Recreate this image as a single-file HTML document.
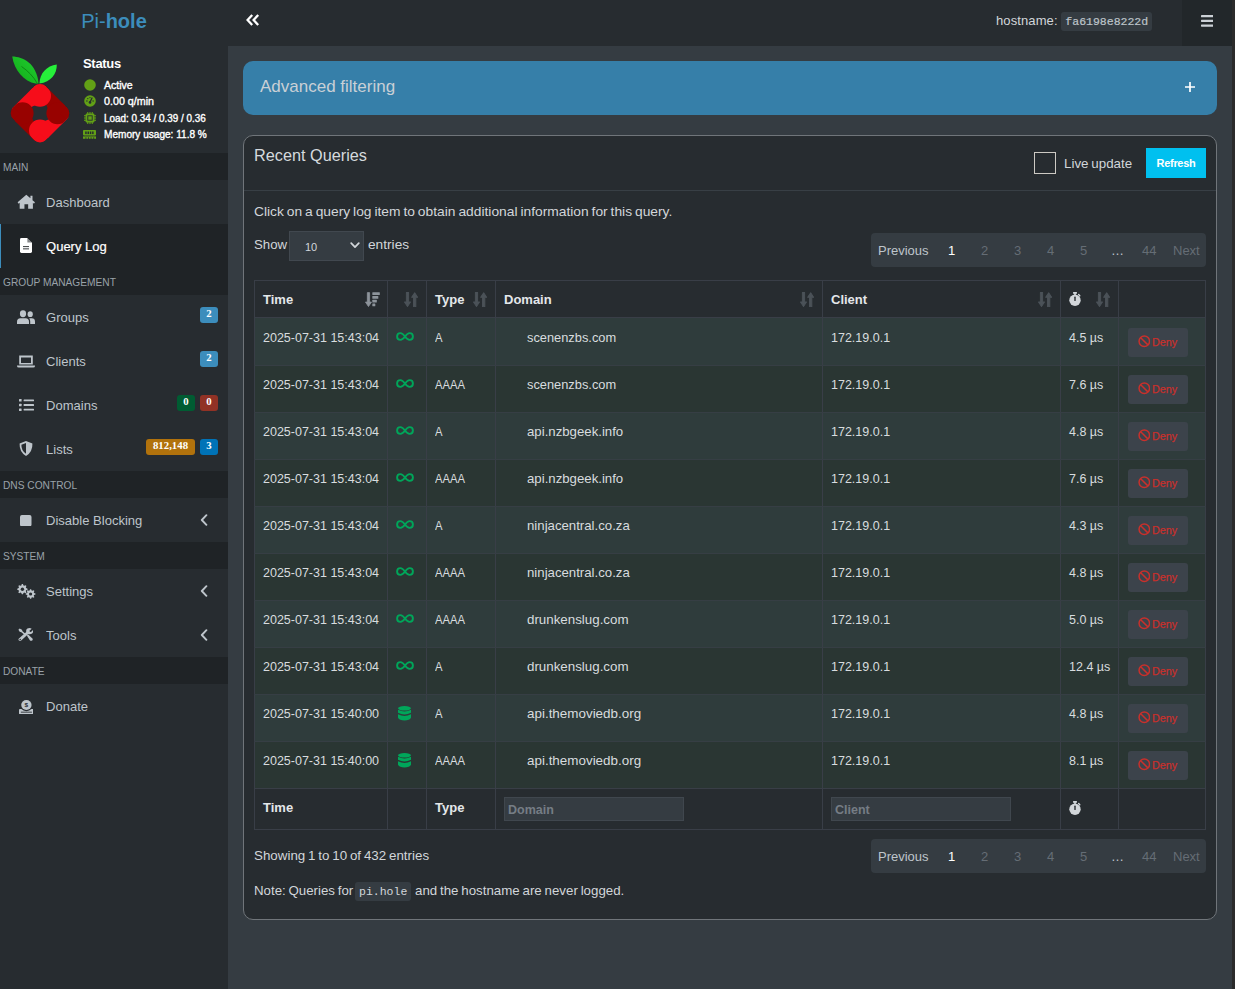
<!DOCTYPE html>
<html lang="en">
<head>
<meta charset="utf-8">
<title>Pi-hole - Query Log</title>
<style>
*{box-sizing:border-box;margin:0;padding:0}
html,body{width:1235px;height:989px;overflow:hidden}
body{background:#353c42;color:#bec5cb;font-family:"Liberation Sans",sans-serif;font-size:13px;position:relative}
.abs{position:absolute;white-space:nowrap}
svg{display:block}
#hdr{left:0;top:0;width:1232px;height:46px;background:#272c30}
#logo{left:0;top:0;width:228px;height:46px;text-align:center;color:#3c8dbc;font-size:20px;line-height:42px}
#hostname{left:996px;top:11px;height:20px;line-height:20px;font-size:13px;color:#d2d6da;letter-spacing:.1px}
#hostname code{font-family:"Liberation Mono",monospace;font-size:11.5px;background:#353c42;color:#bec5cb;padding:3px 4px 3px 4px;border-radius:3px;margin-left:0;letter-spacing:0;-webkit-text-stroke:.2px #bec5cb}
#burger{left:1182px;top:0;width:50px;height:46px;background:#22272a}
#scroll{left:1232px;top:0;width:3px;height:989px;background:#2b2b2b}
#side{left:0;top:46px;width:228px;height:943px;background:#272c30}
#status{left:83px;top:56px;font-size:13px;font-weight:bold;color:#fff;line-height:16px;letter-spacing:-0.3px}
.st{font-size:10px;font-weight:normal;color:#fff;line-height:16px;-webkit-text-stroke:.35px #fff}
.band{left:0;width:228px;height:27px;background:#1f2326;color:#9aa2a9;font-size:11.5px;line-height:29px;padding-left:3px}
.sx{display:inline-block;transform-origin:0 50%}
.item{left:0;width:228px;height:44px;color:#bec5cb;font-size:13.5px;line-height:46px}
.item .t{position:absolute;left:46px;top:0}
.item.act{background:#1f2326;border-left:1px solid #3c8dbc;color:#fff;-webkit-text-stroke:.2px #fff}
.item.act .t{left:45px}
.badge{position:absolute;top:12px;height:16px;border-radius:3px;color:#fff;font-family:"Liberation Serif",serif;font-weight:bold;font-size:10.8px;line-height:13px;text-align:center}
#adv{left:243px;top:61px;width:974px;height:54px;background:#367fa9;border-radius:10px;color:#c9d0d6;font-size:17px;line-height:52px;padding-left:17px}
#box{left:243px;top:135px;width:974px;height:785px;background:#272c30;border:1px solid #70757a;border-radius:10px}
#boxhdr{left:244px;top:190px;width:972px;height:1px;background:#383f45}
.h3{font-size:16.5px;color:#d5dade;line-height:20px}
.txt{font-size:13.5px;line-height:18px;color:#d2d6da;word-spacing:-.9px}
#cb{left:1034px;top:152px;width:22px;height:22px;border:1px solid #cdcac4;background:#272c30}
#refresh{left:1146px;top:148px;width:60px;height:30px;background:#00c0ef;color:#fff;font-size:11px;line-height:30px;text-align:center;font-weight:bold;letter-spacing:-0.3px}
#sel{left:289px;top:231px;width:75px;height:30px;background:#353c42;border:1px solid #41484f;font-size:11px;line-height:30px;padding-left:15px;color:#d2d6da}
.pag{left:871px;width:335px;height:34px;background:#353c42;border-radius:4px;font-size:13px;line-height:36px}
.pag span{position:absolute;top:0}
.pag .d{color:#656d75}
.pag .c{color:#fff}
/* table */
#tbl{left:254px;top:280px;width:951px;border-collapse:collapse;table-layout:fixed;font-size:12.5px;color:#d8dcdf}
#tbl td,#tbl th{border:1px solid #393e47;padding:0 0 0 8px;text-align:left;vertical-align:top;position:relative;white-space:nowrap;overflow:hidden}
#tbl th{height:36px;line-height:36px;font-size:13px;font-weight:bold;color:#e4e7ea;background:#272c30}
#tbl tbody td{height:47px;line-height:39px}
#tbl tr.o td{background:#2f3c3c}
#tbl tr.e td{background:#2a3633}
#tbl tbody td{border-top-color:#363e44;border-bottom-color:#363e44}
#tbl tbody tr.f td{border-top-color:#393e47}
#tbl tbody tr:last-child td{border-bottom-color:#393e47}
#tbl tr.f td{height:48px;padding-top:1px}
#tbl tr.f td .si,#tbl tr.f td .deny{margin-top:1px}
#tbl tfoot td{height:41px;line-height:38px;font-size:13px;font-weight:bold;color:#e4e7ea;background:#272c30}
.si{position:absolute;top:10.5px}
.deny{position:absolute;left:9px;top:9px;width:60px;height:28.5px;background:#3c434b;border-radius:3px;color:#c9302c;font-size:11.5px;line-height:29px;-webkit-text-stroke:.25px #c9302c}
.deny svg{position:absolute;left:9.5px;top:7.1px}
.deny span{position:absolute;left:24px;top:0;transform:scaleX(.94);transform-origin:0 50%}
.inp{position:absolute;left:8px;top:8px;width:180px;height:24px;background:#353c42;border:1px solid #40474e;color:#757d85;font-size:12.5px;line-height:25px;padding-left:3px;font-weight:bold}
code.c2{font-family:"Liberation Mono",monospace;font-size:11.5px;background:#353c42;color:#d2d6da;padding:3px 4px;border-radius:3px}

.ht{position:relative;top:1px}

</style>
</head>
<body>
<div id="hdr" class="abs"></div>
<div id="logo" class="abs">Pi-<b>hole</b></div>
<div class="abs" style="left:246px;top:14.4px;"><svg width="14" height="12" viewBox="0 0 14 12" preserveAspectRatio="none" style=""><path d="M6.2 1 L1.6 6 L6.2 11 M12.2 1 L7.6 6 L12.2 11" fill="none" stroke="#ffffff" stroke-width="2.3" stroke-linecap="butt" stroke-linejoin="miter"/></svg></div>
<div id="hostname" class="abs">hostname: <code>fa6198e8222d</code></div>
<div id="burger" class="abs"></div>
<div class="abs" style="left:1201px;top:15px;"><svg width="12.4" height="12" viewBox="0 0 12 11" preserveAspectRatio="none" style=""><g fill="#ccd1d6"><rect x="0" y="0" width="12" height="2.1" rx=".6"/><rect x="0" y="4.3" width="12" height="2.1" rx=".6"/><rect x="0" y="8.6" width="12" height="2.1" rx=".6"/></g></svg></div>
<div id="scroll" class="abs"></div>
<div id="side" class="abs"></div>
<div class="abs" style="left:10px;top:54px;"><svg width="62" height="90" viewBox="0 0 62 90" preserveAspectRatio="none" style="">
<defs><clipPath id="sq"><rect x="-23.2" y="-23.2" width="46.4" height="46.4" rx="8.5"/></clipPath>
<linearGradient id="lg1" x1="0" y1="1" x2="1" y2="0"><stop offset="0" stop-color="#12a818"/><stop offset="1" stop-color="#20d030"/></linearGradient></defs>
<path d="M2.2 2.4 C13 2.6 26.5 9 28.6 29.4 L25.6 29.6 C14 27 4.5 17 2.2 2.4 Z" fill="url(#lg1)"/>
<path d="M11.5 12.5 C18 17 23.5 22.5 27.3 29.5" fill="none" stroke="#0d7a12" stroke-width=".8"/>
<path d="M29.4 29.6 C29.8 19.5 36.5 11.8 46.8 10.6 C47 20 41 28.2 29.4 29.6 Z" fill="#26f03a"/>
<g transform="translate(30,59.2) rotate(45)" clip-path="url(#sq)">
<rect x="-23.2" y="-23.2" width="46.4" height="46.4" fill="#272c30"/>
<path transform="rotate(0)" fill="#f60d1a" d="M-24.2 -12.3 L-4.800000000000001 -12.3 Q-9.8 0 -13.8 10.3 L-24.2 18.3 Z"/><path transform="rotate(90)" fill="#980200" d="M-24.2 -12.3 L-4.800000000000001 -12.3 Q-9.8 0 -13.8 10.3 L-24.2 18.3 Z"/><path transform="rotate(180)" fill="#f60d1a" d="M-24.2 -12.3 L-4.800000000000001 -12.3 Q-9.8 0 -13.8 10.3 L-24.2 18.3 Z"/><path transform="rotate(270)" fill="#980200" d="M-24.2 -12.3 L-4.800000000000001 -12.3 Q-9.8 0 -13.8 10.3 L-24.2 18.3 Z"/>
<circle cx="-12.3" cy="-12.3" r="11.0" fill="#f60d1a"/>
<circle cx="12.3" cy="-12.3" r="11.0" fill="#980200"/>
<circle cx="12.3" cy="12.3" r="11.0" fill="#f60d1a"/>
<circle cx="-12.3" cy="12.3" r="11.0" fill="#980200"/>
<rect x="-23.2" y="-23.2" width="9" height="9" fill="#f60d1a"/><rect x="14.2" y="-23.2" width="9" height="9" fill="#980200"/><rect x="14.2" y="14.2" width="9" height="9" fill="#f60d1a"/><rect x="-23.2" y="14.2" width="9" height="9" fill="#980200"/>
</g></svg></div>
<div class="abs" id="status">Status</div>
<div class="abs" style="left:84px;top:79px;"><svg width="12" height="12" viewBox="0 0 12 12" preserveAspectRatio="none" style=""><circle cx="6" cy="6" r="5.8" fill="#62a016"/></svg></div>
<div class="abs" style="left:84px;top:95px;"><svg width="12" height="12" viewBox="0 0 12 12" preserveAspectRatio="none" style=""><circle cx="6" cy="6" r="5.8" fill="#62a016"/><path d="M6 7.2 L8 3" stroke="#272c30" stroke-width="1.3" stroke-linecap="round"/><circle cx="6" cy="7.4" r="1.3" fill="#272c30"/><circle cx="2.9" cy="6" r=".7" fill="#272c30"/><circle cx="3.8" cy="3.6" r=".7" fill="#272c30"/><circle cx="6" cy="2.6" r=".7" fill="#272c30"/><circle cx="9.1" cy="6" r=".7" fill="#272c30"/></svg></div>
<div class="abs" style="left:84px;top:112px;"><svg width="12" height="12" viewBox="0 0 12 12" preserveAspectRatio="none" style=""><rect x="3.2" y="0" width="1.1" height="12" fill="#62a016"/><rect x="0" y="3.2" width="12" height="1.1" fill="#62a016"/><rect x="5.45" y="0" width="1.1" height="12" fill="#62a016"/><rect x="0" y="5.45" width="12" height="1.1" fill="#62a016"/><rect x="7.7" y="0" width="1.1" height="12" fill="#62a016"/><rect x="0" y="7.7" width="12" height="1.1" fill="#62a016"/><rect x="1.6" y="1.6" width="8.8" height="8.8" rx="1.2" fill="#62a016"/><rect x="3.8" y="3.8" width="4.4" height="4.4" fill="none" stroke="#272c30" stroke-width=".9"/></svg></div>
<div class="abs" style="left:83px;top:130px;"><svg width="13" height="9" viewBox="0 0 13 9" preserveAspectRatio="none" style=""><rect x="0" y="0" width="13" height="5.4" rx=".8" fill="#62a016"/><rect x="2.2" y="1.5" width="1.5" height="2.6" fill="#272c30"/><rect x="4.5" y="1.5" width="1.5" height="2.6" fill="#272c30"/><rect x="6.8" y="1.5" width="1.5" height="2.6" fill="#272c30"/><rect x="9.1" y="1.5" width="1.5" height="2.6" fill="#272c30"/><rect x="0" y="6.4" width="13" height="2.4" fill="#62a016"/><rect x="2.4" y="7.4" width="1" height="1.4" fill="#272c30"/><rect x="5" y="7.4" width="1" height="1.4" fill="#272c30"/><rect x="7.6" y="7.4" width="1" height="1.4" fill="#272c30"/><rect x="10.2" y="7.4" width="1" height="1.4" fill="#272c30"/></svg></div>
<div class="abs st" style="left:104px;top:78.1px"><span class="sx" id="f1" style="transform:scaleX(1.0554)">Active</span></div>
<div class="abs st" style="left:104px;top:94.1px"><span class="sx" id="f2" style="transform:scaleX(1.0718)">0.00 q/min</span></div>
<div class="abs st" style="left:104px;top:111.1px"><span class="sx" id="f3" style="transform:scaleX(0.9904)">Load: 0.34 / 0.39 / 0.36</span></div>
<div class="abs st" style="left:104px;top:127.1px"><span class="sx" id="f4" style="transform:scaleX(1.007)">Memory usage: 11.8 %</span></div>
<div class="abs band" style="top:153px"><span class="sx" style="transform:scaleX(.885)">MAIN</span></div>
<div class="abs item" style="top:180px"><span class="t sx" style="transform:scaleX(.965)">Dashboard</span></div>
<div class="abs" style="left:17px;top:194px;"><svg width="18.6" height="15.4" viewBox="0 0 18 14" preserveAspectRatio="none" style=""><path fill="#bec5cb" d="M9 0.6 L0.6 7.6 L1.6 8.8 L2.6 8 V13.4 H7.2 V9.4 H10.8 V13.4 H15.4 V8 L16.4 8.8 L17.4 7.6 L15 5.6 V1.6 H13 V3.9 Z"/></svg></div>
<div class="abs item act" style="top:224px"><span class="t sx" style="transform:scaleX(.965)">Query Log</span></div>
<div class="abs" style="left:20px;top:238px;"><svg width="12" height="15" viewBox="0 0 12 15" preserveAspectRatio="none" style=""><path fill="#ffffff" d="M1.4 0 H7.2 L12 4.8 V13.6 Q12 15 10.6 15 H1.4 Q0 15 0 13.6 V1.4 Q0 0 1.4 0 Z"/><path fill="#1f2326" d="M7.4 0.2 V4.6 H11.8 Z" opacity="0.55"/><rect x="3" y="8" width="6" height="1.1" fill="#1f2326" opacity=".8"/><rect x="3" y="10.3" width="6" height="1.1" fill="#1f2326" opacity=".8"/><rect x="3" y="12" width="6" height="1.2" fill="#1f2326" opacity="0"/></svg></div>
<div class="abs band" style="top:268px"><span class="sx" style="transform:scaleX(.885)">GROUP MANAGEMENT</span></div>
<div class="abs item" style="top:295px"><span class="t sx" style="transform:scaleX(.965)">Groups</span><span class="badge" style="left:200px;width:18px;background:#3c8dbc">2</span></div>
<div class="abs" style="left:17px;top:310px;"><svg width="18" height="14.4" viewBox="0 0 18 13" preserveAspectRatio="none" style=""><circle cx="6" cy="3.4" r="3.1" fill="#bec5cb"/><path fill="#bec5cb" d="M0 12.6 V10.6 Q0 7.4 3.4 7.4 H8.6 Q12 7.4 12 10.6 V12.6 Z"/><circle cx="13.2" cy="3.8" r="2.6" fill="#bec5cb"/><path fill="#bec5cb" d="M13.2 12.6 V10.4 Q13.2 8.6 12.2 7.5 H14.8 Q18 7.5 18 10.6 V12.6 Z"/></svg></div>
<div class="abs item" style="top:339px"><span class="t sx" style="transform:scaleX(.965)">Clients</span><span class="badge" style="left:200px;width:18px;background:#3c8dbc">2</span></div>
<div class="abs" style="left:17px;top:355px;"><svg width="18" height="13" viewBox="0 0 18 13" preserveAspectRatio="none" style=""><path fill="#bec5cb" d="M2.2 0.6 H15.8 V9.6 H2.2 Z M4 2.4 V8 H14 V2.4 Z" fill-rule="evenodd"/><path fill="#bec5cb" d="M0 10.4 H18 V11 Q18 12.6 16.2 12.6 H1.8 Q0 12.6 0 11 Z"/></svg></div>
<div class="abs item" style="top:383px"><span class="t sx" style="transform:scaleX(.965)">Domains</span><span class="badge" style="left:177px;width:18px;background:#005c32">0</span><span class="badge" style="left:200px;width:18px;background:#913225">0</span></div>
<div class="abs" style="left:19px;top:399px;"><svg width="15" height="12" viewBox="0 0 15 12" preserveAspectRatio="none" style=""><g fill="#bec5cb"><rect x="0" y="0" width="2.6" height="2.6" rx=".5"/><rect x="0" y="4.7" width="2.6" height="2.6" rx=".5"/><rect x="0" y="9.4" width="2.6" height="2.6" rx=".5"/><rect x="4.6" y="0.4" width="10.4" height="1.8" rx=".5"/><rect x="4.6" y="5.1" width="10.4" height="1.8" rx=".5"/><rect x="4.6" y="9.8" width="10.4" height="1.8" rx=".5"/></g></svg></div>
<div class="abs item" style="top:427px"><span class="t sx" style="transform:scaleX(.965)">Lists</span><span class="badge" style="left:146px;width:49px;background:#b1720c">812,148</span><span class="badge" style="left:200px;width:18px;background:#0073b7">3</span></div>
<div class="abs" style="left:19px;top:441px;"><svg width="14" height="15" viewBox="0 0 14 15" preserveAspectRatio="none" style=""><path fill="#bec5cb" d="M7 0 L13.4 2.4 Q13.8 10.6 7 15 Q0.2 10.6 0.6 2.4 Z"/><path fill="#272c30" d="M7 2 V12.8 Q2.2 9.6 2.4 3.8 Z"/></svg></div>
<div class="abs band" style="top:471px"><span class="sx" style="transform:scaleX(.885)">DNS CONTROL</span></div>
<div class="abs item" style="top:498px"><span class="t sx" style="transform:scaleX(.965)">Disable Blocking</span></div>
<div class="abs" style="left:20.4px;top:514.6px;"><svg width="11.5" height="11.5" viewBox="0 0 13 13" preserveAspectRatio="none" style=""><rect x="0" y="0" width="13" height="13" rx="2.2" fill="#bec5cb"/></svg></div>
<div class="abs" style="left:200px;top:514px;"><svg width="8" height="12" viewBox="0 0 8 12" preserveAspectRatio="none" style=""><path d="M6.4 1.2 L1.8 6 L6.4 10.8" fill="none" stroke="#bec5cb" stroke-width="1.9" stroke-linecap="round" stroke-linejoin="round"/></svg></div>
<div class="abs band" style="top:542px"><span class="sx" style="transform:scaleX(.885)">SYSTEM</span></div>
<div class="abs item" style="top:569px"><span class="t sx" style="transform:scaleX(.965)">Settings</span></div>
<div class="abs" style="left:17px;top:584px;"><svg width="19" height="15" viewBox="0 0 19 15" preserveAspectRatio="none" style=""><path fill="#bec5cb" d="M10.57 4.63 L10.57 5.77 L9.15 6.29 L8.82 7.08 L9.46 8.45 L8.65 9.26 L7.28 8.62 L6.49 8.95 L5.97 10.37 L4.83 10.37 L4.31 8.95 L3.52 8.62 L2.15 9.26 L1.34 8.45 L1.98 7.08 L1.65 6.29 L0.23 5.77 L0.23 4.63 L1.65 4.11 L1.98 3.32 L1.34 1.95 L2.15 1.14 L3.52 1.78 L4.31 1.45 L4.83 0.03 L5.97 0.03 L6.49 1.45 L7.28 1.78 L8.65 1.14 L9.46 1.95 L8.82 3.32 L9.15 4.11 Z"/><circle cx="5.4" cy="5.2" r="1.7" fill="#272c30"/><path fill="#bec5cb" d="M18.47 9.46 L18.47 10.54 L17.06 11.00 L16.75 11.73 L17.42 13.06 L16.66 13.82 L15.33 13.15 L14.60 13.46 L14.14 14.87 L13.06 14.87 L12.60 13.46 L11.87 13.15 L10.54 13.82 L9.78 13.06 L10.45 11.73 L10.14 11.00 L8.73 10.54 L8.73 9.46 L10.14 9.00 L10.45 8.27 L9.78 6.94 L10.54 6.18 L11.87 6.85 L12.60 6.54 L13.06 5.13 L14.14 5.13 L14.60 6.54 L15.33 6.85 L16.66 6.18 L17.42 6.94 L16.75 8.27 L17.06 9.00 Z"/><circle cx="13.6" cy="10" r="1.6" fill="#272c30"/></svg></div>
<div class="abs" style="left:200px;top:585px;"><svg width="8" height="12" viewBox="0 0 8 12" preserveAspectRatio="none" style=""><path d="M6.4 1.2 L1.8 6 L6.4 10.8" fill="none" stroke="#bec5cb" stroke-width="1.9" stroke-linecap="round" stroke-linejoin="round"/></svg></div>
<div class="abs item" style="top:613px"><span class="t sx" style="transform:scaleX(.965)">Tools</span></div>
<div class="abs" style="left:18.4px;top:628.4px;"><svg width="15" height="13.4" viewBox="0 0 16 16" preserveAspectRatio="none" style=""><g fill="#bec5cb"><path d="M1.2 0.2 L3.6 1.6 L4.2 3.4 L8 7.2 L6.8 8.4 L3 4.6 L1.2 4 L-0.2 1.6 Z" transform="translate(.6,.4)"/><path d="M9.4 9 L10.8 7.8 L15.4 12.4 Q16.2 13.6 15.2 14.8 Q14 15.8 12.8 15 Z"/><path d="M10 0.6 Q12.6 -0.6 14.6 0.8 L12.2 3.2 L12.6 4.4 L13.8 4.8 L16 2.4 Q16.8 4.8 15 6.6 Q13.2 8 11 7.2 L3.4 14.8 Q2.2 15.8 1 14.8 Q0 13.6 1 12.4 L8.8 4.8 Q8.2 2.2 10 0.6 Z"/></g><circle cx="2.3" cy="13.6" r=".8" fill="#272c30"/></svg></div>
<div class="abs" style="left:200px;top:629px;"><svg width="8" height="12" viewBox="0 0 8 12" preserveAspectRatio="none" style=""><path d="M6.4 1.2 L1.8 6 L6.4 10.8" fill="none" stroke="#bec5cb" stroke-width="1.9" stroke-linecap="round" stroke-linejoin="round"/></svg></div>
<div class="abs band" style="top:657px"><span class="sx" style="transform:scaleX(.885)">DONATE</span></div>
<div class="abs item" style="top:684px"><span class="t sx" style="transform:scaleX(.965)">Donate</span></div>
<div class="abs" style="left:18.7px;top:700px;"><svg width="14.8" height="14.2" viewBox="0 0 16 16" preserveAspectRatio="none" style=""><circle cx="8" cy="5.6" r="5.6" fill="#bec5cb"/><text x="8" y="8.2" font-family="Liberation Sans" font-weight="bold" font-size="7" text-anchor="middle" fill="#272c30">$</text><path fill="#bec5cb" d="M0 11.2 Q0 10.2 1 10.2 H2.6 Q4.6 12.6 8 12.6 Q11.4 12.6 13.4 10.2 H15 Q16 10.2 16 11.2 V15 Q16 16 15 16 H1 Q0 16 0 15 Z"/><rect x="2" y="13.2" width="12" height="1" fill="#272c30"/></svg></div>
<div id="adv" class="abs">Advanced filtering</div>
<div class="abs" style="left:1185px;top:82px;"><svg width="10" height="10" viewBox="0 0 10 10" preserveAspectRatio="none" style=""><path d="M5 0.4 V9.6 M0.4 5 H9.6" stroke="#ffffff" stroke-width="1.7" stroke-linecap="round"/></svg></div>
<div id="box" class="abs"></div>
<div id="boxhdr" class="abs"></div>
<div class="abs h3" style="left:254px;top:144.5px;"><span class="sx" style="transform:scaleX(.985)">Recent Queries</span></div>
<div id="cb" class="abs"></div>
<div class="abs txt" style="left:1063.5px;top:155px"><span class="sx" id="f5" style="transform:scaleX(0.9894)">Live update</span></div>
<div id="refresh" class="abs">Refresh</div>
<div class="abs txt" style="left:254px;top:203px"><span class="sx" id="f6" style="transform:scaleX(1.0224)">Click on a query log item to obtain additional information for this query.</span></div>
<div class="abs txt" style="left:254px;top:236px"><span class="sx" id="f7" style="transform:scaleX(0.9793)">Show</span></div>
<div id="sel" class="abs">10</div>
<div class="abs" style="left:350px;top:242px;"><svg width="10" height="7" viewBox="0 0 10 7" preserveAspectRatio="none" style=""><path d="M1.2 1.2 L5 5.2 L8.8 1.2" fill="none" stroke="#d2d6da" stroke-width="1.7" stroke-linecap="round" stroke-linejoin="round"/></svg></div>
<div class="abs txt" style="left:367.5px;top:236px"><span class="sx" id="f8" style="transform:scaleX(1.0143)">entries</span></div>
<div class="abs pag" style="top:233px"><span style="left:7px">Previous</span><span class="c" style="left:77px">1</span><span class="d" style="left:110px">2</span><span class="d" style="left:143px">3</span><span class="d" style="left:176px">4</span><span class="d" style="left:209px">5</span><span style="left:240px">…</span><span class="d" style="left:271px">44</span><span class="d" style="left:302px">Next</span></div>
<div class="abs pag" style="top:839px"><span style="left:7px">Previous</span><span class="c" style="left:77px">1</span><span class="d" style="left:110px">2</span><span class="d" style="left:143px">3</span><span class="d" style="left:176px">4</span><span class="d" style="left:209px">5</span><span style="left:240px">…</span><span class="d" style="left:271px">44</span><span class="d" style="left:302px">Next</span></div>
<table id="tbl" class="abs"><colgroup><col style="width:133px"><col style="width:39px"><col style="width:69px"><col style="width:327px"><col style="width:238px"><col style="width:58px"><col style="width:87px"></colgroup><thead><tr><th><span class="ht">Time</span><span class="si" style="left:110px"><svg width="15" height="15.4" viewBox="0 0 16 15" preserveAspectRatio="none" style=""><g fill="#8d949b"><path stroke="#8d949b" stroke-width=".8" stroke-linejoin="round" d="M2.5 0.6 H4.9 V9.8 H6.9 L3.7 14.2 L0.5 9.8 H2.5 Z"/><rect x="7.8" y="0.2" width="8" height="2.7" rx=".5"/><rect x="7.8" y="3.9" width="6.4" height="2.7" rx=".5"/><rect x="7.8" y="7.6" width="4.8" height="2.7" rx=".5"/><rect x="7.8" y="11.3" width="3.2" height="2.7" rx=".5"/></g></svg></span></th><th><span class="si" style="left:16px"><svg width="14.2" height="15.4" viewBox="0 0 15 15" preserveAspectRatio="none" style=""><g fill="#4b5258" stroke="#4b5258" stroke-width="1" stroke-linejoin="round"><path d="M2.5 0.6 H4.9 V9.8 H6.9 L3.7 14.2 L0.5 9.8 H2.5 Z"/><path d="M10.1 14.4 H12.5 V5.2 H14.5 L11.3 0.8 L8.1 5.2 H10.1 Z"/></g></svg></span></th><th><span class="ht">Type</span><span class="si" style="left:46px"><svg width="14.2" height="15.4" viewBox="0 0 15 15" preserveAspectRatio="none" style=""><g fill="#4b5258" stroke="#4b5258" stroke-width="1" stroke-linejoin="round"><path d="M2.5 0.6 H4.9 V9.8 H6.9 L3.7 14.2 L0.5 9.8 H2.5 Z"/><path d="M10.1 14.4 H12.5 V5.2 H14.5 L11.3 0.8 L8.1 5.2 H10.1 Z"/></g></svg></span></th><th><span class="ht">Domain</span><span class="si" style="left:304px"><svg width="14.2" height="15.4" viewBox="0 0 15 15" preserveAspectRatio="none" style=""><g fill="#4b5258" stroke="#4b5258" stroke-width="1" stroke-linejoin="round"><path d="M2.5 0.6 H4.9 V9.8 H6.9 L3.7 14.2 L0.5 9.8 H2.5 Z"/><path d="M10.1 14.4 H12.5 V5.2 H14.5 L11.3 0.8 L8.1 5.2 H10.1 Z"/></g></svg></span></th><th><span class="ht">Client</span><span class="si" style="left:215px"><svg width="14.2" height="15.4" viewBox="0 0 15 15" preserveAspectRatio="none" style=""><g fill="#4b5258" stroke="#4b5258" stroke-width="1" stroke-linejoin="round"><path d="M2.5 0.6 H4.9 V9.8 H6.9 L3.7 14.2 L0.5 9.8 H2.5 Z"/><path d="M10.1 14.4 H12.5 V5.2 H14.5 L11.3 0.8 L8.1 5.2 H10.1 Z"/></g></svg></span></th><th><span class="si" style="left:8px;top:11px"><svg width="12" height="14" viewBox="0 0 12 14" preserveAspectRatio="none" style=""><rect x="4" y="0" width="4" height="1.8" rx=".5" fill="#d2d6da"/><rect x="5.2" y="1" width="1.6" height="2" fill="#d2d6da"/><path d="M9.6 2.6 L10.8 3.8" stroke="#d2d6da" stroke-width="1.4" stroke-linecap="round"/><circle cx="6" cy="8.2" r="5.7" fill="#d2d6da"/><rect x="5.3" y="4.6" width="1.4" height="4.4" rx=".6" fill="#272c30"/></svg></span><span class="si" style="left:35px"><svg width="14.2" height="15.4" viewBox="0 0 15 15" preserveAspectRatio="none" style=""><g fill="#4b5258" stroke="#4b5258" stroke-width="1" stroke-linejoin="round"><path d="M2.5 0.6 H4.9 V9.8 H6.9 L3.7 14.2 L0.5 9.8 H2.5 Z"/><path d="M10.1 14.4 H12.5 V5.2 H14.5 L11.3 0.8 L8.1 5.2 H10.1 Z"/></g></svg></span></th><th></th></tr></thead><tbody><tr class="o f"><td>2025-07-31 15:43:04</td><td><span class="si" style="left:8px;top:13px"><svg width="18" height="9" viewBox="0 0 18 9" preserveAspectRatio="none" style=""><path d="M9 4.5 C7.2 2 6 1.1 4.4 1.1 C2.4 1.1 1.1 2.6 1.1 4.5 C1.1 6.4 2.4 7.9 4.4 7.9 C6 7.9 7.2 7 9 4.5 C10.8 2 12 1.1 13.6 1.1 C15.6 1.1 16.9 2.6 16.9 4.5 C16.9 6.4 15.6 7.9 13.6 7.9 C12 7.9 10.8 7 9 4.5 Z" fill="none" stroke="#00a65a" stroke-width="1.9"/></svg></span></td><td><span class="sx" style="transform:scaleX(.9)">A</span></td><td style="padding-left:30.5px;font-size:13px"><span class="sx" style="transform:translateY(-1px) scaleX(0.987)">scenenzbs.com</span></td><td>172.19.0.1</td><td>4.5 µs</td><td><div class="deny"><svg width="12.6" height="12.6" viewBox="0 0 12 12" preserveAspectRatio="none" style=""><circle cx="6" cy="6" r="5" fill="none" stroke="#c9302c" stroke-width="1.4"/><path d="M2.6 2.6 L9.4 9.4" stroke="#c9302c" stroke-width="1.4"/></svg><span>Deny</span></div></td></tr><tr class="e"><td>2025-07-31 15:43:04</td><td><span class="si" style="left:8px;top:13px"><svg width="18" height="9" viewBox="0 0 18 9" preserveAspectRatio="none" style=""><path d="M9 4.5 C7.2 2 6 1.1 4.4 1.1 C2.4 1.1 1.1 2.6 1.1 4.5 C1.1 6.4 2.4 7.9 4.4 7.9 C6 7.9 7.2 7 9 4.5 C10.8 2 12 1.1 13.6 1.1 C15.6 1.1 16.9 2.6 16.9 4.5 C16.9 6.4 15.6 7.9 13.6 7.9 C12 7.9 10.8 7 9 4.5 Z" fill="none" stroke="#00a65a" stroke-width="1.9"/></svg></span></td><td><span class="sx" style="transform:scaleX(.9)">AAAA</span></td><td style="padding-left:30.5px;font-size:13px"><span class="sx" style="transform:translateY(-1px) scaleX(0.987)">scenenzbs.com</span></td><td>172.19.0.1</td><td>7.6 µs</td><td><div class="deny"><svg width="12.6" height="12.6" viewBox="0 0 12 12" preserveAspectRatio="none" style=""><circle cx="6" cy="6" r="5" fill="none" stroke="#c9302c" stroke-width="1.4"/><path d="M2.6 2.6 L9.4 9.4" stroke="#c9302c" stroke-width="1.4"/></svg><span>Deny</span></div></td></tr><tr class="o"><td>2025-07-31 15:43:04</td><td><span class="si" style="left:8px;top:13px"><svg width="18" height="9" viewBox="0 0 18 9" preserveAspectRatio="none" style=""><path d="M9 4.5 C7.2 2 6 1.1 4.4 1.1 C2.4 1.1 1.1 2.6 1.1 4.5 C1.1 6.4 2.4 7.9 4.4 7.9 C6 7.9 7.2 7 9 4.5 C10.8 2 12 1.1 13.6 1.1 C15.6 1.1 16.9 2.6 16.9 4.5 C16.9 6.4 15.6 7.9 13.6 7.9 C12 7.9 10.8 7 9 4.5 Z" fill="none" stroke="#00a65a" stroke-width="1.9"/></svg></span></td><td><span class="sx" style="transform:scaleX(.9)">A</span></td><td style="padding-left:30.5px;font-size:13px"><span class="sx" style="transform:translateY(-1px) scaleX(1.016)">api.nzbgeek.info</span></td><td>172.19.0.1</td><td>4.8 µs</td><td><div class="deny"><svg width="12.6" height="12.6" viewBox="0 0 12 12" preserveAspectRatio="none" style=""><circle cx="6" cy="6" r="5" fill="none" stroke="#c9302c" stroke-width="1.4"/><path d="M2.6 2.6 L9.4 9.4" stroke="#c9302c" stroke-width="1.4"/></svg><span>Deny</span></div></td></tr><tr class="e"><td>2025-07-31 15:43:04</td><td><span class="si" style="left:8px;top:13px"><svg width="18" height="9" viewBox="0 0 18 9" preserveAspectRatio="none" style=""><path d="M9 4.5 C7.2 2 6 1.1 4.4 1.1 C2.4 1.1 1.1 2.6 1.1 4.5 C1.1 6.4 2.4 7.9 4.4 7.9 C6 7.9 7.2 7 9 4.5 C10.8 2 12 1.1 13.6 1.1 C15.6 1.1 16.9 2.6 16.9 4.5 C16.9 6.4 15.6 7.9 13.6 7.9 C12 7.9 10.8 7 9 4.5 Z" fill="none" stroke="#00a65a" stroke-width="1.9"/></svg></span></td><td><span class="sx" style="transform:scaleX(.9)">AAAA</span></td><td style="padding-left:30.5px;font-size:13px"><span class="sx" style="transform:translateY(-1px) scaleX(1.016)">api.nzbgeek.info</span></td><td>172.19.0.1</td><td>7.6 µs</td><td><div class="deny"><svg width="12.6" height="12.6" viewBox="0 0 12 12" preserveAspectRatio="none" style=""><circle cx="6" cy="6" r="5" fill="none" stroke="#c9302c" stroke-width="1.4"/><path d="M2.6 2.6 L9.4 9.4" stroke="#c9302c" stroke-width="1.4"/></svg><span>Deny</span></div></td></tr><tr class="o"><td>2025-07-31 15:43:04</td><td><span class="si" style="left:8px;top:13px"><svg width="18" height="9" viewBox="0 0 18 9" preserveAspectRatio="none" style=""><path d="M9 4.5 C7.2 2 6 1.1 4.4 1.1 C2.4 1.1 1.1 2.6 1.1 4.5 C1.1 6.4 2.4 7.9 4.4 7.9 C6 7.9 7.2 7 9 4.5 C10.8 2 12 1.1 13.6 1.1 C15.6 1.1 16.9 2.6 16.9 4.5 C16.9 6.4 15.6 7.9 13.6 7.9 C12 7.9 10.8 7 9 4.5 Z" fill="none" stroke="#00a65a" stroke-width="1.9"/></svg></span></td><td><span class="sx" style="transform:scaleX(.9)">A</span></td><td style="padding-left:30.5px;font-size:13px"><span class="sx" style="transform:translateY(-1px) scaleX(1.016)">ninjacentral.co.za</span></td><td>172.19.0.1</td><td>4.3 µs</td><td><div class="deny"><svg width="12.6" height="12.6" viewBox="0 0 12 12" preserveAspectRatio="none" style=""><circle cx="6" cy="6" r="5" fill="none" stroke="#c9302c" stroke-width="1.4"/><path d="M2.6 2.6 L9.4 9.4" stroke="#c9302c" stroke-width="1.4"/></svg><span>Deny</span></div></td></tr><tr class="e"><td>2025-07-31 15:43:04</td><td><span class="si" style="left:8px;top:13px"><svg width="18" height="9" viewBox="0 0 18 9" preserveAspectRatio="none" style=""><path d="M9 4.5 C7.2 2 6 1.1 4.4 1.1 C2.4 1.1 1.1 2.6 1.1 4.5 C1.1 6.4 2.4 7.9 4.4 7.9 C6 7.9 7.2 7 9 4.5 C10.8 2 12 1.1 13.6 1.1 C15.6 1.1 16.9 2.6 16.9 4.5 C16.9 6.4 15.6 7.9 13.6 7.9 C12 7.9 10.8 7 9 4.5 Z" fill="none" stroke="#00a65a" stroke-width="1.9"/></svg></span></td><td><span class="sx" style="transform:scaleX(.9)">AAAA</span></td><td style="padding-left:30.5px;font-size:13px"><span class="sx" style="transform:translateY(-1px) scaleX(1.016)">ninjacentral.co.za</span></td><td>172.19.0.1</td><td>4.8 µs</td><td><div class="deny"><svg width="12.6" height="12.6" viewBox="0 0 12 12" preserveAspectRatio="none" style=""><circle cx="6" cy="6" r="5" fill="none" stroke="#c9302c" stroke-width="1.4"/><path d="M2.6 2.6 L9.4 9.4" stroke="#c9302c" stroke-width="1.4"/></svg><span>Deny</span></div></td></tr><tr class="o"><td>2025-07-31 15:43:04</td><td><span class="si" style="left:8px;top:13px"><svg width="18" height="9" viewBox="0 0 18 9" preserveAspectRatio="none" style=""><path d="M9 4.5 C7.2 2 6 1.1 4.4 1.1 C2.4 1.1 1.1 2.6 1.1 4.5 C1.1 6.4 2.4 7.9 4.4 7.9 C6 7.9 7.2 7 9 4.5 C10.8 2 12 1.1 13.6 1.1 C15.6 1.1 16.9 2.6 16.9 4.5 C16.9 6.4 15.6 7.9 13.6 7.9 C12 7.9 10.8 7 9 4.5 Z" fill="none" stroke="#00a65a" stroke-width="1.9"/></svg></span></td><td><span class="sx" style="transform:scaleX(.9)">AAAA</span></td><td style="padding-left:30.5px;font-size:13px"><span class="sx" style="transform:translateY(-1px) scaleX(1.026)">drunkenslug.com</span></td><td>172.19.0.1</td><td>5.0 µs</td><td><div class="deny"><svg width="12.6" height="12.6" viewBox="0 0 12 12" preserveAspectRatio="none" style=""><circle cx="6" cy="6" r="5" fill="none" stroke="#c9302c" stroke-width="1.4"/><path d="M2.6 2.6 L9.4 9.4" stroke="#c9302c" stroke-width="1.4"/></svg><span>Deny</span></div></td></tr><tr class="e"><td>2025-07-31 15:43:04</td><td><span class="si" style="left:8px;top:13px"><svg width="18" height="9" viewBox="0 0 18 9" preserveAspectRatio="none" style=""><path d="M9 4.5 C7.2 2 6 1.1 4.4 1.1 C2.4 1.1 1.1 2.6 1.1 4.5 C1.1 6.4 2.4 7.9 4.4 7.9 C6 7.9 7.2 7 9 4.5 C10.8 2 12 1.1 13.6 1.1 C15.6 1.1 16.9 2.6 16.9 4.5 C16.9 6.4 15.6 7.9 13.6 7.9 C12 7.9 10.8 7 9 4.5 Z" fill="none" stroke="#00a65a" stroke-width="1.9"/></svg></span></td><td><span class="sx" style="transform:scaleX(.9)">A</span></td><td style="padding-left:30.5px;font-size:13px"><span class="sx" style="transform:translateY(-1px) scaleX(1.026)">drunkenslug.com</span></td><td>172.19.0.1</td><td>12.4 µs</td><td><div class="deny"><svg width="12.6" height="12.6" viewBox="0 0 12 12" preserveAspectRatio="none" style=""><circle cx="6" cy="6" r="5" fill="none" stroke="#c9302c" stroke-width="1.4"/><path d="M2.6 2.6 L9.4 9.4" stroke="#c9302c" stroke-width="1.4"/></svg><span>Deny</span></div></td></tr><tr class="o"><td>2025-07-31 15:40:00</td><td><span class="si" style="left:10px;top:11px"><svg width="13" height="14.5" viewBox="0 0 12 14" preserveAspectRatio="none" style=""><g fill="#00a65a"><ellipse cx="6" cy="2.2" rx="6" ry="2.2"/><path d="M0 3.6 Q6 7 12 3.6 V6.6 Q6 10 0 6.6 Z"/><path d="M0 7.9 Q6 11.3 12 7.9 V11.4 Q10.6 14 6 14 Q1.4 14 0 11.4 Z"/></g></svg></span></td><td><span class="sx" style="transform:scaleX(.9)">A</span></td><td style="padding-left:30.5px;font-size:13px"><span class="sx" style="transform:translateY(-1px) scaleX(1.032)">api.themoviedb.org</span></td><td>172.19.0.1</td><td>4.8 µs</td><td><div class="deny"><svg width="12.6" height="12.6" viewBox="0 0 12 12" preserveAspectRatio="none" style=""><circle cx="6" cy="6" r="5" fill="none" stroke="#c9302c" stroke-width="1.4"/><path d="M2.6 2.6 L9.4 9.4" stroke="#c9302c" stroke-width="1.4"/></svg><span>Deny</span></div></td></tr><tr class="e"><td>2025-07-31 15:40:00</td><td><span class="si" style="left:10px;top:11px"><svg width="13" height="14.5" viewBox="0 0 12 14" preserveAspectRatio="none" style=""><g fill="#00a65a"><ellipse cx="6" cy="2.2" rx="6" ry="2.2"/><path d="M0 3.6 Q6 7 12 3.6 V6.6 Q6 10 0 6.6 Z"/><path d="M0 7.9 Q6 11.3 12 7.9 V11.4 Q10.6 14 6 14 Q1.4 14 0 11.4 Z"/></g></svg></span></td><td><span class="sx" style="transform:scaleX(.9)">AAAA</span></td><td style="padding-left:30.5px;font-size:13px"><span class="sx" style="transform:translateY(-1px) scaleX(1.032)">api.themoviedb.org</span></td><td>172.19.0.1</td><td>8.1 µs</td><td><div class="deny"><svg width="12.6" height="12.6" viewBox="0 0 12 12" preserveAspectRatio="none" style=""><circle cx="6" cy="6" r="5" fill="none" stroke="#c9302c" stroke-width="1.4"/><path d="M2.6 2.6 L9.4 9.4" stroke="#c9302c" stroke-width="1.4"/></svg><span>Deny</span></div></td></tr></tbody><tfoot><tr><td>Time</td><td></td><td>Type</td><td><div class="inp">Domain</div></td><td><div class="inp">Client</div></td><td><span class="si" style="left:8px;top:12px"><svg width="12" height="14" viewBox="0 0 12 14" preserveAspectRatio="none" style=""><rect x="4" y="0" width="4" height="1.8" rx=".5" fill="#d2d6da"/><rect x="5.2" y="1" width="1.6" height="2" fill="#d2d6da"/><path d="M9.6 2.6 L10.8 3.8" stroke="#d2d6da" stroke-width="1.4" stroke-linecap="round"/><circle cx="6" cy="8.2" r="5.7" fill="#d2d6da"/><rect x="5.3" y="4.6" width="1.4" height="4.4" rx=".6" fill="#272c30"/></svg></span></td><td></td></tr></tfoot></table>
<div class="abs txt" style="left:254px;top:847px"><span class="sx" id="f9" style="transform:scaleX(0.9893)">Showing 1 to 10 of 432 entries</span></div>
<div class="abs txt" style="left:254px;top:882px"><span class="sx" id="f10" style="transform:scaleX(0.983)">Note: Queries for</span></div>
<div class="abs txt" style="left:355px;top:882px"><code class="c2">pi.hole</code></div>
<div class="abs txt" style="left:415px;top:882px"><span class="sx" id="f11" style="transform:scaleX(0.9853)">and the hostname are never logged.</span></div>
</body>
</html>
